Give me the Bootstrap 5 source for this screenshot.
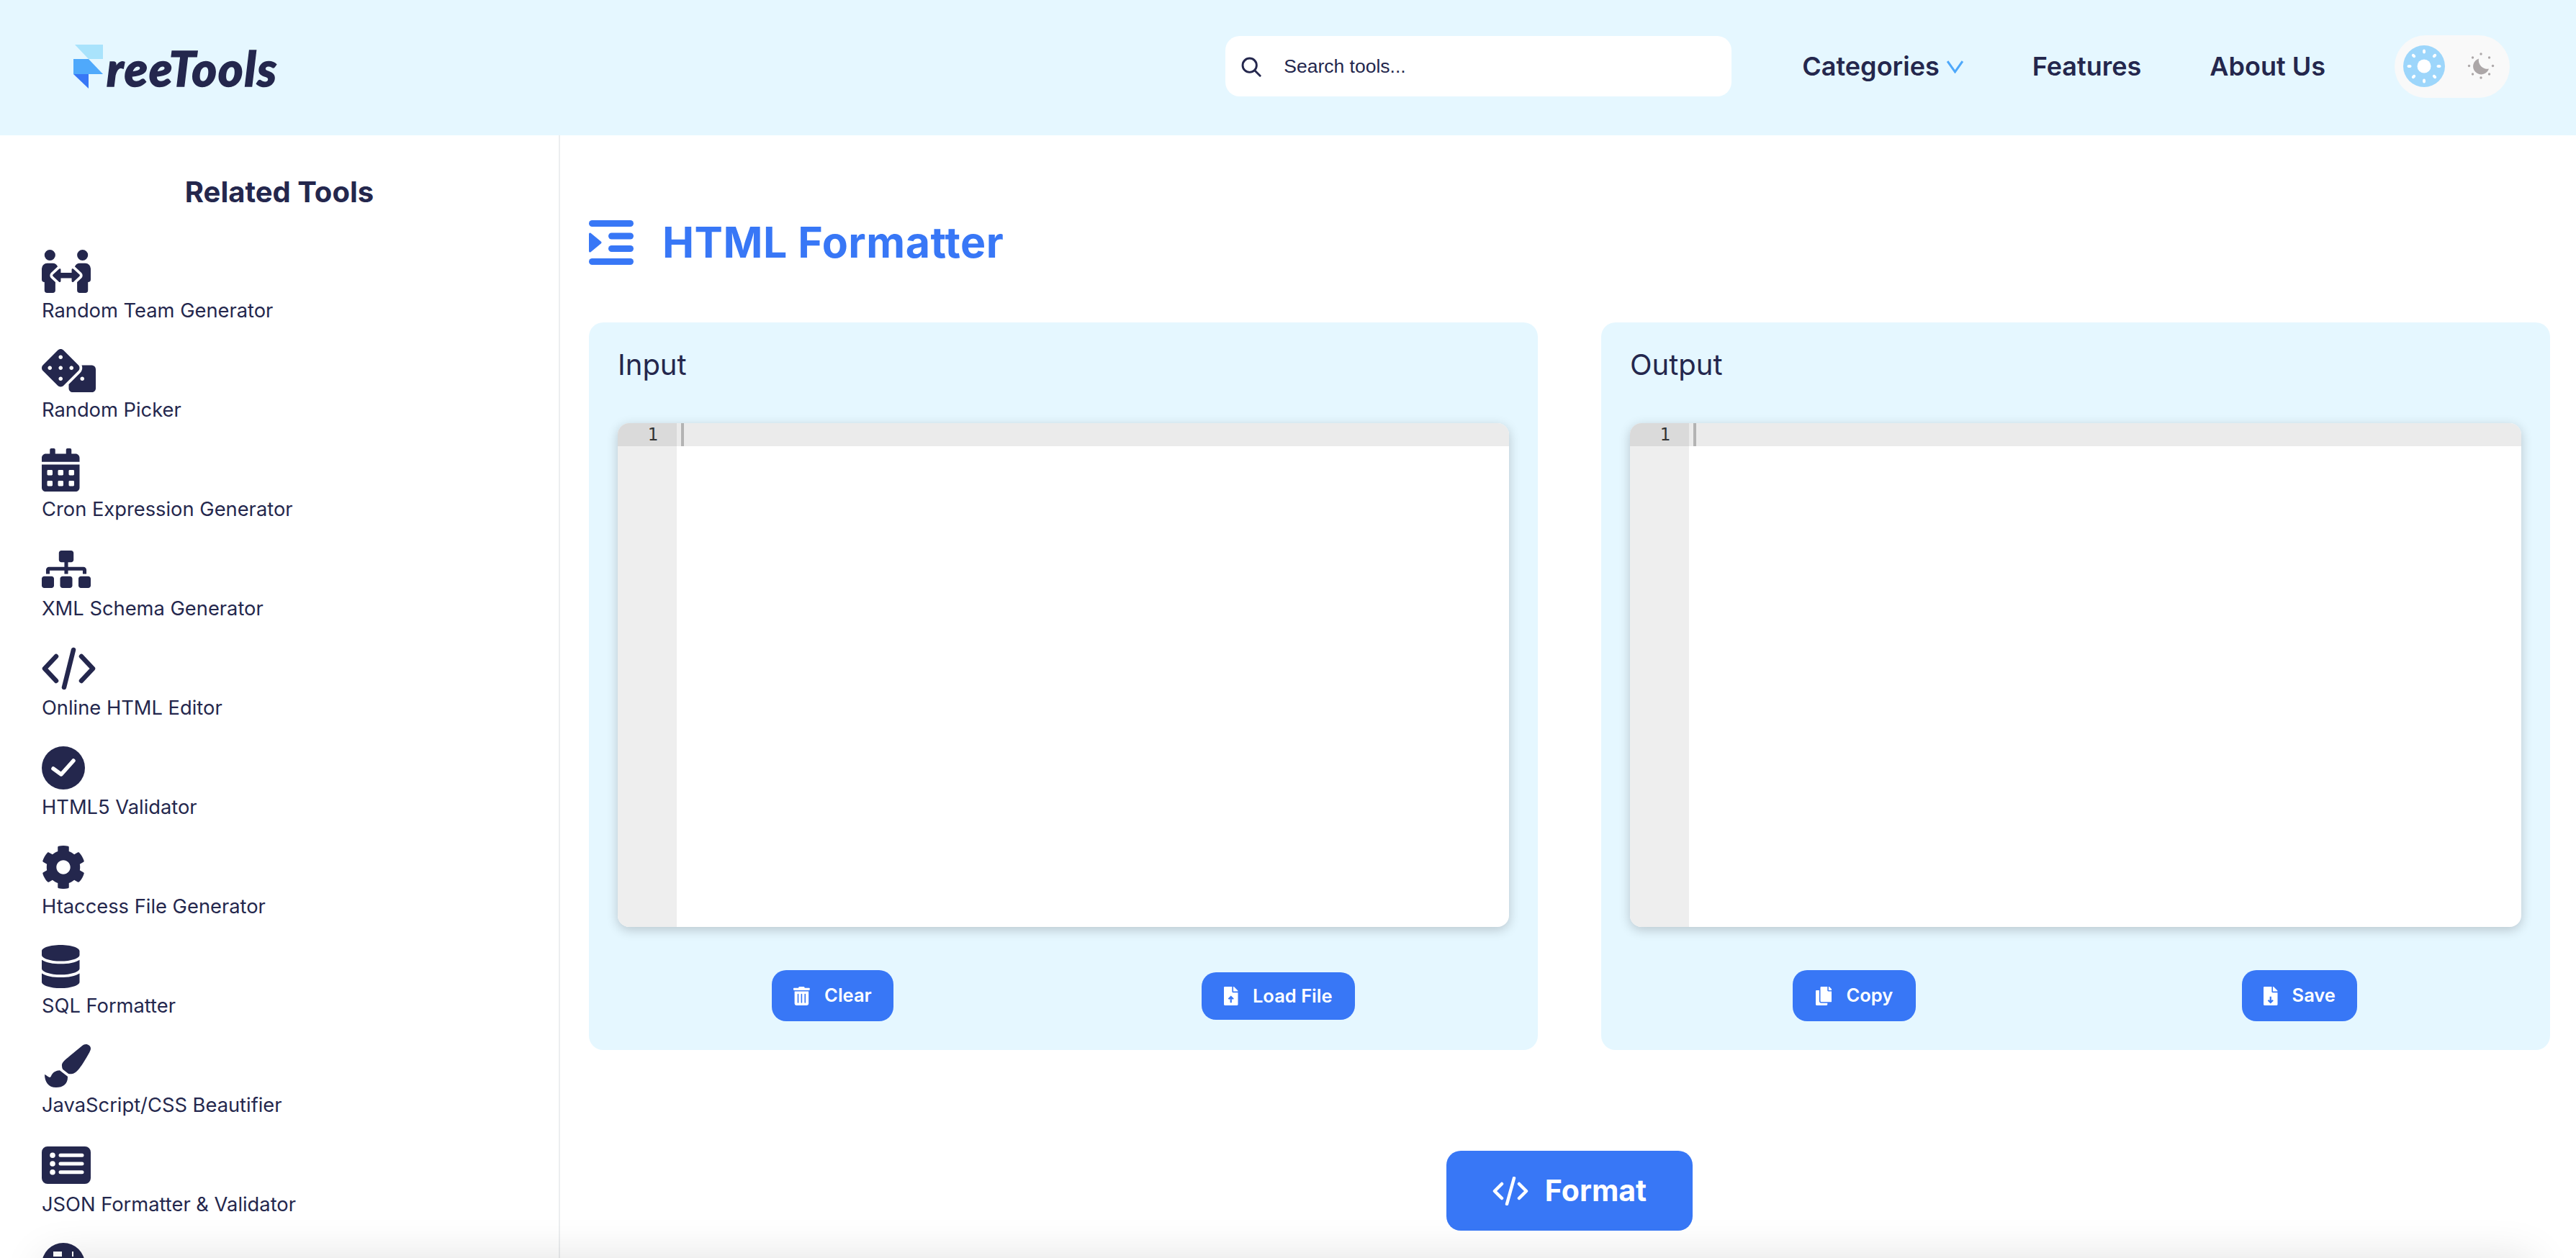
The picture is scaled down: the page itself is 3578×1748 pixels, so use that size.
<!DOCTYPE html>
<html lang="en"><head><meta charset="utf-8"><title>HTML Formatter</title>
<link href="https://cdn.jsdelivr.net/npm/bootstrap@5.3.0/dist/css/bootstrap.min.css" rel="stylesheet">
<style>
html,body{height:1748px;overflow:hidden}
body{font-family:Inter,"Noto Sans",sans-serif;color:#24274d;background:#fff}
.ft-shell{height:1748px;overflow:hidden;position:relative}
.ft-head{height:188px;background:#e5f7ff;padding:0 92px 4px 102px}
.ft-logo{width:290px;gap:5px}
.ft-logo-mark{width:41px;height:61px;flex:none}
.ft-logo-text{font:italic 900 66px/1 Lato,sans-serif;color:#24274d;letter-spacing:1.8px;-webkit-text-stroke:1.5px #24274d;margin-top:6px}
.ft-search{width:703px;height:84px;background:#fff;border-radius:20px;padding:0 24px 0 21px;gap:31px}
.ft-search-ico{width:29px;height:29px;flex:none}
.ft-search-in{border:0;outline:0;background:transparent;font:26.5px "Liberation Sans",sans-serif;color:#24274d;flex:1;padding:0;min-width:0}
.ft-search-in::placeholder{color:#24274d;opacity:1}
.ft-link{font-size:36px;font-weight:600;color:#24274d;text-decoration:none;line-height:1}
.ft-navs{margin-left:98px;gap:95px}
.ft-caret{width:25px;height:19px;margin-left:9px}
.ft-toggle{width:160px;height:87px;background:#f9f9f9;border-radius:44px;margin-left:96px;padding:0 12px}
.ft-sun{width:58px;height:58px;border-radius:50%;background:#9dd6fb}
.ft-moon{width:40px;height:40px;margin-right:8px}
.ft-body{height:1560px}
.ft-side{width:778px;flex:none;border-right:2px solid #eceef0;padding:55px 0 0 58px;overflow:hidden}
.ft-side-title{font-size:40px;font-weight:700;color:#24274d;text-align:center;line-height:48px;margin:0 0 0 -58px;padding-bottom:56px}
.ft-tool{height:138px;color:#24274d;text-decoration:none;display:flow-root}
.ft-tool-ico{display:block;fill:#24274d}
.ft-ico-mid{margin:4px 0}
.ft-ico-brush{margin-left:4px}
.ft-tool-name{display:block;font-size:27.3px;line-height:40px;padding-top:5px;box-sizing:content-box;color:#24274d}
.ft-main{padding:0 36px 0 40px;min-width:0}
.ft-title{height:260px;padding-top:118px;gap:39px;margin:0}
.ft-title-ico{width:63px;height:62px;flex:none;fill:#3877f6}
.ft-title-text{font-size:59px;font-weight:700;color:#3877f6;line-height:62px;margin:0;letter-spacing:.5px}
.ft-grid{display:grid;grid-template-columns:1318px 1318px;column-gap:88px}
.ft-panel{height:1011px;background:#e5f7ff;border-radius:20px;padding:34px 40px 40px;display:flex;flex-direction:column}
.ft-panel-label{font-size:40px;line-height:50px;font-weight:400;color:#24274d;margin:0 0 56px}
.ft-editor{height:700px;background:#fff;border-radius:16px;overflow:hidden;box-shadow:0 4px 16px rgba(0,0,0,.2);display:flex;flex:none}
.ft-gutter{width:82px;background:#eee;flex:none}
.ft-gutter-active{height:32px;background:#dadada;font:24px/32px "DejaVu Sans Mono",monospace;color:#333;text-align:right;padding-right:26px}
.ft-code{flex:1;position:relative}
.ft-line{height:32px;background:#ebebeb;padding-left:6px}
.ft-cursor{display:block;width:4px;height:32px;background:#b3b3b3}
.ft-actions{margin-top:60px;flex:1;align-items:flex-start}
.ft-btn{background:#3877f6;border:0;border-radius:20px;color:#fff;font-size:25.5px;font-weight:600;height:71px;padding:0;display:inline-flex;align-items:center;justify-content:center;gap:20px}
.ft-btn svg{height:26px;width:auto;fill:#fff}
.ft-btn:hover{background:#3877f6;color:#fff}
.ft-w-clear{width:169px;margin-left:214px}
.ft-w-load{width:213px;height:66px;margin:3px 214px 0 0}
.ft-w-copy{width:171px;margin-left:226px}
.ft-w-save{width:160px;margin-right:228px}
.ft-format-row{margin-top:140px}
.ft-format{width:342px;height:111px;font-size:41px;font-weight:700;border-radius:20px;gap:23px}
.ft-btn.ft-format svg{height:40px;fill:none;stroke:#fff;stroke-width:4.5;stroke-linecap:round;stroke-linejoin:round}
.ft-fade{position:absolute;left:60px;right:60px;bottom:-60px;height:60px;box-shadow:0 0 60px rgba(0,0,0,.12)}
</style></head><body>
<div class="ft-shell">
<header class="ft-head d-flex align-items-center">
  <a class="ft-logo d-flex align-items-center text-decoration-none" href="#">
    <svg class="ft-logo-mark" viewBox="0 0 41 61"><polygon points="2,0 41,0 41,20 21,20" fill="#a9e3fc"/><polygon points="0,20 21,20 41,41 0,41" fill="#4fa9fb"/><polygon points="0,41 21,41 21,61" fill="#3877f6"/></svg>
    <span class="ft-logo-text">reeTools</span>
  </a>
  <div class="ms-auto d-flex align-items-center">
    <div class="ft-search d-flex align-items-center">
      <svg class="ft-search-ico" viewBox="0 0 24 24" fill="none" stroke="#24274d" stroke-width="2.4"><circle cx="10.500" cy="10.500" r="8"/><path d="M16.500 16.500 22.500 22.500" stroke-linecap="round"/></svg>
      <input class="ft-search-in" placeholder="Search tools...">
    </div>
    <nav class="ft-navs d-flex align-items-center">
      <a class="ft-link d-flex align-items-center" href="#">Categories<svg class="ft-caret" viewBox="0 0 24 18" fill="none" stroke="#4fa9fb" stroke-width="3"><path d="M2 2 12 16 22 2"/></svg></a>
      <a class="ft-link" href="#">Features</a>
      <a class="ft-link" href="#">About Us</a>
    </nav>
    <div class="ft-toggle d-flex align-items-center justify-content-between">
      <div class="ft-sun d-flex align-items-center justify-content-center">
        <svg width="58" height="58" viewBox="0 0 58 58" fill="#fff"><circle cx="29" cy="29" r="9.500"/><g><ellipse cx="29" cy="8.500" rx="2" ry="3"/><ellipse cx="29" cy="49.500" rx="2" ry="3"/><ellipse cx="8.500" cy="29" rx="3" ry="2"/><ellipse cx="49.500" cy="29" rx="3" ry="2"/><ellipse cx="14.500" cy="14.500" rx="2" ry="3" transform="rotate(-45 14.500 14.500)"/><ellipse cx="43.500" cy="14.500" rx="2" ry="3" transform="rotate(45 43.500 14.500)"/><ellipse cx="14.500" cy="43.500" rx="2" ry="3" transform="rotate(45 14.500 43.500)"/><ellipse cx="43.500" cy="43.500" rx="2" ry="3" transform="rotate(-45 43.500 43.500)"/></g></svg>
      </div>
      <svg class="ft-moon" viewBox="0 0 40 40" fill="#aca7a8"><path d="M17 9.500A11.200 11.200 0 1 0 31 23.500 12 12 0 0 1 17 9.500z"/><circle cx="20" cy="3" r="1.700"/><circle cx="20" cy="36" r="1.700"/><circle cx="3.500" cy="19.500" r="1.700"/><circle cx="36.500" cy="19.500" r="1.700"/><circle cx="8.500" cy="8" r="1.700"/><circle cx="31.500" cy="8" r="1.700"/><circle cx="8.500" cy="31" r="1.700"/><circle cx="31.500" cy="31" r="1.700"/></svg>
    </div>
  </div>
</header>
<div class="ft-body d-flex">
  <aside class="ft-side">
    <h2 class="ft-side-title">Related Tools</h2>
    <a class="ft-tool" href="#"><svg class="ft-tool-ico" viewBox="0 0 576 512" width="68" height="60" preserveAspectRatio="none"><path d="M96,128A64,64,0,1,0,32,64,64,64,0,0,0,96,128Zm0,176.08a44.11,44.11,0,0,1,13.64-32L181.77,204c1.65-1.55,3.77-2.31,5.61-3.57A63.91,63.91,0,0,0,128,160H64A64,64,0,0,0,0,224V352a32,32,0,0,0,32,32V480a32,32,0,0,0,32,32h64a32,32,0,0,0,32-32V383.61l-50.36-47.53A44.08,44.08,0,0,1,96,304.08ZM480,128a64,64,0,1,0-64-64A64,64,0,0,0,480,128Zm32,32H448a63.91,63.91,0,0,0-59.38,40.42c1.84,1.27,4,2,5.62,3.59l72.12,68.06a44.37,44.37,0,0,1,0,64L416,383.62V480a32,32,0,0,0,32,32h64a32,32,0,0,0,32-32V384a32,32,0,0,0,32-32V224A64,64,0,0,0,512,160ZM444.4,295.34l-72.12-68.06A12,12,0,0,0,352,236v36H224V236a12,12,0,0,0-20.28-8.73L131.6,295.34a12.4,12.4,0,0,0,0,17.47l72.12,68.07A12,12,0,0,0,224,372.14V336H352v36.14a12,12,0,0,0,20.28,8.74l72.12-68.07A12.4,12.4,0,0,0,444.4,295.34Z"/></svg><span class="ft-tool-name">Random Team Generator</span></a>
    <a class="ft-tool" href="#"><svg class="ft-tool-ico" viewBox="0 0 640 512" width="75" height="60"><path d="M592 192H473.26c12.69 29.59 7.12 65.2-17 89.32L320 417.58V464c0 26.51 21.49 48 48 48h224c26.51 0 48-21.49 48-48V240c0-26.51-21.49-48-48-48zM480 376c-13.25 0-24-10.75-24-24 0-13.26 10.75-24 24-24s24 10.74 24 24c0 13.25-10.75 24-24 24zm-46.37-186.7L258.7 14.37c-19.16-19.16-50.23-19.16-69.39 0L14.37 189.3c-19.16 19.16-19.16 50.23 0 69.39L189.3 433.63c19.16 19.16 50.23 19.16 69.39 0L433.63 258.7c19.16-19.17 19.16-50.24 0-69.4zM96 248c-13.25 0-24-10.75-24-24 0-13.26 10.75-24 24-24s24 10.74 24 24c0 13.25-10.75 24-24 24zm128 128c-13.25 0-24-10.75-24-24 0-13.26 10.75-24 24-24s24 10.74 24 24c0 13.25-10.75 24-24 24zm0-128c-13.25 0-24-10.75-24-24 0-13.26 10.75-24 24-24s24 10.74 24 24c0 13.25-10.75 24-24 24zm0-128c-13.25 0-24-10.75-24-24 0-13.26 10.75-24 24-24s24 10.74 24 24c0 13.25-10.75 24-24 24zm128 128c-13.25 0-24-10.75-24-24 0-13.26 10.75-24 24-24s24 10.74 24 24c0 13.25-10.75 24-24 24z"/></svg><span class="ft-tool-name">Random Picker</span></a>
    <a class="ft-tool" href="#"><svg class="ft-tool-ico" viewBox="0 0 448 512" width="52.5" height="60"><path d="M0 464c0 26.5 21.5 48 48 48h352c26.5 0 48-21.5 48-48V192H0v272zm320-196c0-6.6 5.4-12 12-12h40c6.6 0 12 5.4 12 12v40c0 6.6-5.4 12-12 12h-40c-6.6 0-12-5.4-12-12v-40zm0 128c0-6.6 5.400-12 12-12h40c6.600 0 12 5.400 12 12v40c0 6.600-5.400 12-12 12h-40c-6.600 0-12-5.400-12-12v-40zM192 268c0-6.600 5.400-12 12-12h40c6.600 0 12 5.400 12 12v40c0 6.600-5.400 12-12 12h-40c-6.600 0-12-5.400-12-12v-40zm0 128c0-6.600 5.400-12 12-12h40c6.600 0 12 5.400 12 12v40c0 6.600-5.400 12-12 12h-40c-6.600 0-12-5.400-12-12v-40zM64 268c0-6.600 5.400-12 12-12h40c6.600 0 12 5.400 12 12v40c0 6.600-5.400 12-12 12H76c-6.600 0-12-5.400-12-12v-40zm0 128c0-6.600 5.400-12 12-12h40c6.600 0 12 5.400 12 12v40c0 6.600-5.400 12-12 12H76c-6.600 0-12-5.400-12-12v-40zM400 64h-48V16c0-8.800-7.200-16-16-16h-32c-8.800 0-16 7.200-16 16v48H160V16c0-8.800-7.200-16-16-16h-32c-8.800 0-16 7.200-16 16v48H48C21.500 64 0 85.500 0 112v48h448v-48c0-26.500-21.500-48-48-48z"/></svg><span class="ft-tool-name">Cron Expression Generator</span></a>
    <a class="ft-tool" href="#"><svg class="ft-tool-ico ft-ico-mid" viewBox="0 0 640 512" width="68" height="52" preserveAspectRatio="none"><path d="M128 352H32c-17.670 0-32 14.330-32 32v96c0 17.670 14.330 32 32 32h96c17.670 0 32-14.330 32-32v-96c0-17.670-14.330-32-32-32zm-24-80h192v48h48v-48h192v48h48v-57.590c0-21.170-17.230-38.410-38.410-38.410H344v-64h40c17.670 0 32-14.330 32-32V32c0-17.670-14.330-32-32-32H256c-17.670 0-32 14.330-32 32v96c0 17.670 14.330 32 32 32h40v64H94.410C73.230 224 56 241.230 56 262.410V320h48v-48zm264 80h-96c-17.670 0-32 14.330-32 32v96c0 17.670 14.330 32 32 32h96c17.670 0 32-14.330 32-32v-96c0-17.670-14.330-32-32-32zm240 0h-96c-17.670 0-32 14.330-32 32v96c0 17.670 14.330 32 32 32h96c17.670 0 32-14.330 32-32v-96c0-17.670-14.330-32-32-32z"/></svg><span class="ft-tool-name">XML Schema Generator</span></a>
    <a class="ft-tool" href="#"><svg class="ft-tool-ico" viewBox="0 0 75 60" width="75" height="60" fill="none" stroke="#24274d" stroke-width="6.500" stroke-linecap="round" stroke-linejoin="round" style="fill:none"><path d="M20 13 4 30 20 47M55 13 71 30 55 47M44 4 31 56"/></svg><span class="ft-tool-name">Online HTML Editor</span></a>
    <a class="ft-tool" href="#"><svg class="ft-tool-ico" viewBox="0 0 60 60" width="60" height="60"><circle cx="30" cy="30" r="30"/><path d="M16 31 27 39 44 20" fill="none" stroke="#fff" stroke-width="5.500" stroke-linecap="round" stroke-linejoin="round"/></svg><span class="ft-tool-name">HTML5 Validator</span></a>
    <a class="ft-tool" href="#"><svg class="ft-tool-ico" viewBox="8 8 496 496" width="60" height="60"><path d="M487.4 315.7l-42.600-24.600c4.300-23.200 4.300-47 0-70.200l42.600-24.600c4.900-2.800 7.100-8.600 5.500-14-11.100-35.600-30-67.800-54.700-94.600-3.800-4.100-10-5.100-14.800-2.300L380.800 110c-17.900-15.400-38.500-27.300-60.800-35.100V25.800c0-5.600-3.900-10.500-9.400-11.700-36.700-8.200-74.300-7.800-109.200 0-5.500 1.200-9.400 6.100-9.400 11.700V75c-22.200 7.900-42.800 19.800-60.800 35.100L88.700 85.500c-4.900-2.800-11-1.900-14.800 2.300-24.700 26.700-43.600 58.900-54.700 94.600-1.700 5.400.6 11.200 5.500 14L67.300 221c-4.300 23.200-4.300 47 0 70.200l-42.600 24.600c-4.900 2.800-7.100 8.600-5.500 14 11.100 35.600 30 67.800 54.700 94.600 3.800 4.100 10 5.100 14.800 2.300l42.600-24.600c17.900 15.400 38.500 27.300 60.800 35.100v49.200c0 5.600 3.900 10.500 9.400 11.700 36.700 8.200 74.300 7.800 109.200 0 5.500-1.200 9.400-6.100 9.400-11.700v-49.200c22.200-7.900 42.800-19.800 60.800-35.100l42.600 24.600c4.900 2.800 11 1.900 14.800-2.300 24.700-26.700 43.600-58.900 54.700-94.600 1.500-5.500-.7-11.300-5.600-14.100zM256 336c-44.100 0-80-35.900-80-80s35.900-80 80-80 80 35.900 80 80-35.900 80-80 80z"/></svg><span class="ft-tool-name">Htaccess File Generator</span></a>
    <a class="ft-tool" href="#"><svg class="ft-tool-ico" viewBox="0 0 448 512" width="52.500" height="60"><path d="M448 73.143v45.714C448 159.143 347.667 192 224 192S0 159.143 0 118.857V73.143C0 32.857 100.333 0 224 0s224 32.857 224 73.143zM448 176v102.857C448 319.143 347.667 352 224 352S0 319.143 0 278.857V176c48.125 33.143 136.208 48.572 224 48.572S399.874 209.143 448 176zm0 160v102.857C448 479.143 347.667 512 224 512S0 479.143 0 438.857V336c48.125 33.143 136.208 48.572 224 48.572S399.874 369.143 448 336z"/></svg><span class="ft-tool-name">SQL Formatter</span></a>
    <a class="ft-tool" href="#"><svg class="ft-tool-ico ft-ico-brush" viewBox="0 0 512 512" width="64" height="60" preserveAspectRatio="none"><path d="M167.020 309.340c-40.120 2.580-76.530 17.860-97.190 72.300-2.350 6.210-8 9.980-14.590 9.980-11.110 0-45.460-27.670-55.250-34.350C0 439.620 37.930 512 128 512c75.860 0 128-43.770 128-120.190 0-3.110-.65-6.080-.97-9.130l-88.010-73.340zM457.890 0c-15.160 0-29.370 6.710-40.210 16.450C213.270 199.050 192 203.340 192 257.090c0 13.700 3.250 26.760 8.730 38.700l63.820 53.180c7.210 1.800 14.640 3.030 22.390 3.030 62.110 0 98.110-45.470 211.160-256.460 7.380-14.350 13.900-29.850 13.900-45.990C512 20.640 486 0 457.890 0z"/></svg><span class="ft-tool-name">JavaScript/CSS Beautifier</span></a>
    <a class="ft-tool" href="#"><svg class="ft-tool-ico" viewBox="0 0 68 60" width="68" height="60"><path fill-rule="evenodd" d="M8 4h52a8 8 0 0 1 8 8v36a8 8 0 0 1-8 8H8a8 8 0 0 1-8-8V12a8 8 0 0 1 8-8zm7 8.500a3.800 3.800 0 1 0 0 7.600 3.800 3.800 0 0 0 0-7.600zm0 11.700a3.800 3.800 0 1 0 0 7.600 3.800 3.800 0 0 0 0-7.600zm0 11.700a3.800 3.800 0 1 0 0 7.600 3.800 3.800 0 0 0 0-7.600zM26 13.800a2.500 2.500 0 0 0 0 5h30a2.500 2.500 0 0 0 0-5zm0 11.700a2.500 2.500 0 0 0 0 5h30a2.500 2.500 0 0 0 0-5zm0 11.700a2.500 2.500 0 0 0 0 5h30a2.500 2.500 0 0 0 0-5z"/></svg><span class="ft-tool-name">JSON Formatter &amp; Validator</span></a>
    <a class="ft-tool" href="#"><svg class="ft-tool-ico" viewBox="0 0 60 60" width="60" height="60"><path fill-rule="evenodd" d="M30 0a30 30 0 1 1 0 60 30 30 0 0 1 0-60zM16 12v7h28v-7z"/><rect x="28" y="12" width="14" height="7" fill="#24274d"/></svg></a>
  </aside>
  <main class="ft-main flex-grow-1">
    <div class="ft-title d-flex align-items-start">
      <svg class="ft-title-ico" viewBox="0 0 63 62"><rect width="62" height="9" rx="4.500"/><rect x="27" y="17.500" width="35" height="9" rx="4.500"/><rect x="27" y="35" width="35" height="9" rx="4.500"/><rect y="53" width="62" height="9" rx="4.500"/><path d="M1.500 19 16 31 1.500 43z" stroke="#3877f6" stroke-width="3" stroke-linejoin="round"/></svg>
      <h1 class="ft-title-text">HTML Formatter</h1>
    </div>
    <div class="ft-grid">
      <section class="ft-panel">
        <h3 class="ft-panel-label">Input</h3>
        <div class="ft-editor"><div class="ft-gutter"><div class="ft-gutter-active">1</div></div><div class="ft-code"><div class="ft-line"><span class="ft-cursor"></span></div></div></div>
        <div class="ft-actions d-flex justify-content-between">
          <button class="btn ft-btn ft-w-clear"><svg viewBox="0 0 448 512"><path d="M32 464a48 48 0 0 0 48 48h288a48 48 0 0 0 48-48V128H32zm272-256a16 16 0 0 1 32 0v224a16 16 0 0 1-32 0zm-96 0a16 16 0 0 1 32 0v224a16 16 0 0 1-32 0zm-96 0a16 16 0 0 1 32 0v224a16 16 0 0 1-32 0zM432 32H312l-9.400-18.700A24 24 0 0 0 281.100 0H166.800a23.720 23.720 0 0 0-21.400 13.300L136 32H16A16 16 0 0 0 0 48v32a16 16 0 0 0 16 16h416a16 16 0 0 0 16-16V48a16 16 0 0 0-16-16z"/></svg>Clear</button>
          <button class="btn ft-btn ft-w-load"><svg viewBox="0 0 384 512"><path d="M224 136V0H24C10.700 0 0 10.700 0 24v464c0 13.300 10.700 24 24 24h336c13.300 0 24-10.700 24-24V160H248c-13.200 0-24-10.800-24-24zm160-14.100v6.100H256V0h6.100c6.400 0 12.500 2.500 17 7l97.900 98c4.500 4.500 7 10.600 7 16.900z"/><path d="M192 440V280M128 340l64-64 64 64" fill="none" stroke="#3877f6" stroke-width="44"/></svg>Load File</button>
        </div>
      </section>
      <section class="ft-panel">
        <h3 class="ft-panel-label">Output</h3>
        <div class="ft-editor"><div class="ft-gutter"><div class="ft-gutter-active">1</div></div><div class="ft-code"><div class="ft-line"><span class="ft-cursor"></span></div></div></div>
        <div class="ft-actions d-flex justify-content-between">
          <button class="btn ft-btn ft-w-copy"><svg viewBox="0 0 448 512"><path d="M320 448v40c0 13.255-10.745 24-24 24H24c-13.255 0-24-10.745-24-24V120c0-13.255 10.745-24 24-24h72v296c0 30.879 25.121 56 56 56h168zm0-344V0H152c-13.255 0-24 10.745-24 24v368c0 13.255 10.745 24 24 24h272c13.255 0 24-10.745 24-24V128H344c-13.200 0-24-10.800-24-24zm120.971-31.029L375.029 7.029A24 24 0 0 0 358.059 0H352v96h96v-6.059a24 24 0 0 0-7.029-16.970z"/></svg>Copy</button>
          <button class="btn ft-btn ft-w-save"><svg viewBox="0 0 384 512"><path d="M224 136V0H24C10.700 0 0 10.700 0 24v464c0 13.300 10.700 24 24 24h336c13.300 0 24-10.700 24-24V160H248c-13.200 0-24-10.800-24-24zm160-14.100v6.100H256V0h6.100c6.400 0 12.500 2.500 17 7l97.900 98c4.500 4.500 7 10.600 7 16.900z"/><path d="M192 270V430M128 370l64 64 64-64" fill="none" stroke="#3877f6" stroke-width="44"/></svg>Save</button>
        </div>
      </section>
    </div>
    <div class="ft-format-row d-flex justify-content-center">
      <button class="btn ft-btn ft-format"><svg viewBox="0 0 50 40"><path d="M13 10 3 20 13 30M37 10 47 20 37 30M30 2 20 38"/></svg>Format</button>
    </div>
  </main>
</div>
<div class="ft-fade"></div>
</div>
</body></html>
